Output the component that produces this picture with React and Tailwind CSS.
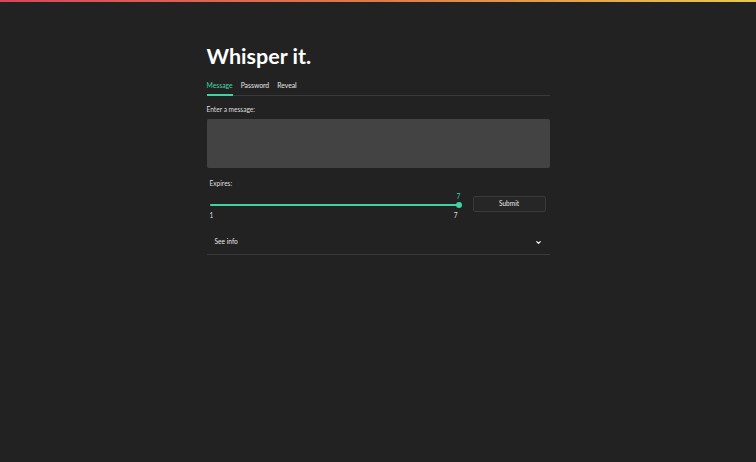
import React, { useState } from 'react';

const App = () => {
  const [tab, setTab] = useState('Message');
  const [days, setDays] = useState(7);

  return (
    <div className="w-full h-[462px] bg-[#222222] text-white overflow-hidden" style={{ fontFamily: 'Lato, "Noto Sans", sans-serif' }}>
      {/* top accent line */}
      <div className="h-[2px] w-full bg-gradient-to-r from-[#d9465b] via-[#de7a48] to-[#e8c84e]" />

      <div className="w-[343px] mx-auto pt-[40px]">
        <h1 className="text-[21.5px] leading-[28px] font-bold">Whisper it.</h1>

        {/* tabs */}
        <div className="mt-[8px] flex gap-[8px] border-b border-[#3a3a3a] text-[6.8px]">
          {['Message', 'Password', 'Reveal'].map((t) => (
            <button
              key={t}
              onClick={() => setTab(t)}
              className={
                'pb-[4px] pt-[2px] border-b-2 -mb-px ' +
                (tab === t ? 'border-[#3fd3a3] text-[#3fd3a3]' : 'border-transparent text-[#e6e6e6]')
              }
            >
              {t}
            </button>
          ))}
        </div>

        <label className="block mt-[9px] text-[6.6px] text-[#dedede]">Enter a message:</label>
        <textarea className="mt-[4px] block w-full h-[49px] bg-[#434343] rounded-[2px] resize-none outline-none text-[8px] p-[4px]" />

        {/* expiry */}
        <div className="mt-[11px] px-[3px] text-[6.6px] text-[#dedede]">Expires:</div>
        <div className="mt-[2px] flex items-start gap-[14px]">
          <div className="w-[252px] pl-[3px]">
            <div className="relative h-[18px]">
              <div className="absolute left-0 right-0 top-[13px] h-[2px] bg-[#3fd3a3] rounded" />
              <div
                className="absolute top-[11px] w-[6px] h-[6px] -ml-[3px] rounded-full bg-[#3fd3a3]"
                style={{ left: `${((days - 1) / 6) * 100}%` }}
              />
              <div
                className="absolute top-[1px] -ml-[2px] text-[6.6px] text-[#3fd3a3]"
                style={{ left: `${((days - 1) / 6) * 100}%` }}
              >
                {days}
              </div>
            </div>
            <div className="flex justify-between text-[6.6px] text-[#dedede] mt-[2px]">
              <span>1</span>
              <span className="pr-[1px]">7</span>
            </div>
          </div>
          <button
            onClick={() => setDays(7)}
            className="mt-[5px] w-[73px] h-[16px] border border-[#3a3a3a] bg-[#262626] rounded-[2px] text-[6.6px] text-[#e6e6e6]"
          >
            Submit
          </button>
        </div>

        {/* info accordion */}
        <div className="mt-[10px] flex items-center justify-between px-[8px] h-[24px] border-b border-[#3a3a3a] text-[6.6px] text-[#e6e6e6]">
          <span>See info</span>
          <svg width="7" height="7" viewBox="0 0 24 24" fill="none" stroke="#ffffff" strokeWidth="4" strokeLinecap="round" strokeLinejoin="round">
            <path d="M6 9l6 6 6-6" />
          </svg>
        </div>
      </div>
    </div>
  );
};

export default App;
